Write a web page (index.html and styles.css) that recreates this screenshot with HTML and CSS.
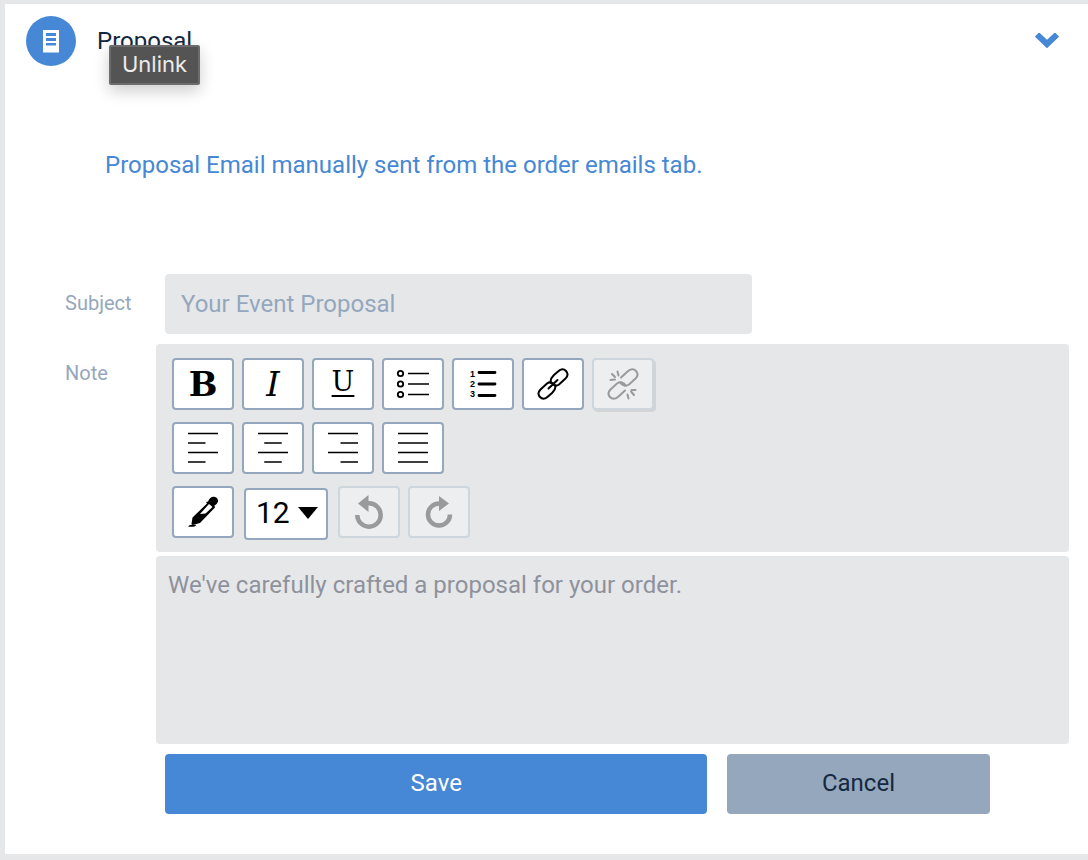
FILE: index.html
```html
<!DOCTYPE html>
<html lang="en">
    <head>
        <meta charset="utf-8">
        <title>Proposal</title>
        <link rel="stylesheet" href="styles.css">
    </head>
    <body>
        <main class="panel">
            <header class="panel_head">
                <span class="panel_icon">
                    <svg width="50" height="50" viewBox="0 0 50 50" aria-hidden="true">
                        <path fill="#fff" fill-rule="evenodd" d="M17 14h16v22.500h-16zM20 17v3h10v-3zM20 22v3h10v-3zM20 27v2.500h10v-2.500z"/>
                    </svg>
                </span>
                <h1 class="panel_title">Proposal<span class="tooltip" role="tooltip" id="unlink_tip">Unlink</span></h1>
                <button type="button" class="collapse" aria-label="Collapse">
                    <svg width="24" height="16" viewBox="0 0 24 16"><path d="M2 1.500l10 9.500L22 1.500" fill="none" stroke="#4688d6" stroke-width="6"/></svg>
                </button>
            </header>
            <p class="message">Proposal Email manually sent from the order emails tab.</p>
            <form class="mail_form">
                <label class="form_label" for="subject">Subject</label>
                <input class="subject" type="text" id="subject" placeholder="Your Event Proposal">

                <label class="form_label note_label" for="note">Note</label>
                <div class="editor">
                    <div class="toolbar">
                        <div class="tool_row">
                            <button type="button" class="tool bold" aria-label="Bold">B</button>
                            <button type="button" class="tool italic" aria-label="Italic">I</button>
                            <button type="button" class="tool underline" aria-label="Underline">U</button>
                            <button type="button" class="tool" aria-label="Bulleted list">
                                <svg width="34" height="30" viewBox="0 0 34 30" fill="none" stroke="#000">
                                    <g stroke-width="1.800"><circle cx="4.500" cy="4.500" r="2.700"/><circle cx="4.500" cy="15" r="2.700"/><circle cx="4.500" cy="25.500" r="2.700"/></g>
                                    <path stroke-width="1.300" d="M12 4.500h21M12 15h21M12 25.500h21"/>
                                </svg>
                            </button>
                            <button type="button" class="tool" aria-label="Numbered list">
                                <svg width="30" height="30" viewBox="0 0 30 30">
                                    <path fill="none" stroke="#000" stroke-width="2.800" stroke-linecap="round" d="M11 3.500h16M11 15h16M11 26.500h16"/>
                                    <g class="list_number"><text x="2" y="8">1</text><text x="2" y="18">2</text><text x="2" y="28">3</text></g>
                                </svg>
                            </button>
                            <button type="button" class="tool" aria-label="Link">
                                <svg width="32" height="32" viewBox="0 0 32 32" fill="none" stroke="#000" stroke-width="2" stroke-linecap="round">
                                    <path d="M14 15C12.500 11 15 9 17 7L21 3.500C24 .5 27 .8 29 3S31 8 28.500 10.500L22 16.500C20 18 18 18 16 16.500"/>
                                    <path d="M18 17C19.500 21 17 23 15 25L11 28.500C8 31.500 5 31.200 3 29S1 24 3.500 21.500L10 15.500C12 14 14 14 16 15.500"/>
                                    <path d="M11.500 20.500l9-8.500"/>
                                </svg>
                            </button>
                            <button type="button" class="tool hovered" aria-label="Unlink" aria-describedby="unlink_tip" disabled>
                                <svg width="32" height="32" viewBox="0 0 32 32" fill="none" stroke="#000" stroke-width="2" stroke-linecap="round">
                                    <path d="M14 9.500L20.500 3.500C23.500 .5 27 .8 29 3S31 8 28.500 10.500L22 16.500C19 18.500 15 18 13.500 14.500"/>
                                    <path d="M18 22.500L11.500 28.500C8.500 31.500 5 31.200 3 29S1 24 3.500 21.500L10 15.500C13 13.500 17 14 18.500 17.500"/>
                                    <path d="M10.500 3.500l1 4M5 6l3 3M3.500 12l4.500-.5M21.500 30.500l-1-4M27 27l-3-3.500M28.500 22h-4"/>
                                </svg>
                            </button>
                        </div>
                        <div class="tool_row">
                            <button type="button" class="tool" aria-label="Align left">
                                <svg width="30" height="32" viewBox="0 0 30 32" fill="none" stroke="#000" stroke-width="1.500"><path d="M0 1.500h30M0 11h17.500M0 20.500h30M0 30h17.500"/></svg>
                            </button>
                            <button type="button" class="tool" aria-label="Align center">
                                <svg width="30" height="32" viewBox="0 0 30 32" fill="none" stroke="#000" stroke-width="1.500"><path d="M0 1.500h30M6.250 11h17.500M0 20.500h30M6.250 30h17.500"/></svg>
                            </button>
                            <button type="button" class="tool" aria-label="Align right">
                                <svg width="30" height="32" viewBox="0 0 30 32" fill="none" stroke="#000" stroke-width="1.500"><path d="M0 1.500h30M12.500 11h17.500M0 20.500h30M12.500 30h17.500"/></svg>
                            </button>
                            <button type="button" class="tool" aria-label="Justify">
                                <svg width="30" height="32" viewBox="0 0 30 32" fill="none" stroke="#000" stroke-width="1.500"><path d="M0 1.500h30M0 11h30M0 20.500h30M0 30h30"/></svg>
                            </button>
                        </div>
                        <div class="tool_row">
                            <button type="button" class="tool" aria-label="Text color">
                                <svg width="30" height="32" viewBox="0 0 30 32">
                                    <path d="M20 5.500c1.500-3.500 4-5.500 7-4.500 3 1 4 4 2 6.500-.8 1-1.700 1.500-2.500 2l.5 2-1.500 1.500L12 27l-7.500 2-1-1 1-6.500L19 7.500l-1-1.500z"/>
                                    <path fill="#fff" d="M21 8l3.500 3-7 6.500-5.500.5z"/>
                                    <path d="M0 30.500c2-1.800 5-1.800 8.500-1.500-1.500 1.800-4.500 2.300-8.500 1.500z"/>
                                </svg>
                            </button>
                            <div class="size_box">
                                <select class="size" aria-label="Font size">
                                    <option>12</option>
                                    <option>14</option>
                                    <option>16</option>
                                </select>
                            </div>
                            <button type="button" class="tool" aria-label="Undo" disabled>
                                <svg width="30" height="36" viewBox="0 0 30 36"><path fill="none" stroke="#000" stroke-width="4.500" d="M3.300 21A11.700 11.700 0 1 0 15 9.300H11"/><path d="M14.500 1v17L4 9.500z"/></svg>
                            </button>
                            <button type="button" class="tool" aria-label="Redo" disabled>
                                <svg width="30" height="36" viewBox="0 0 30 36"><path fill="none" stroke="#000" stroke-width="4.500" d="M26 20.500A11 11 0 1 1 15 9.500h2"/><path d="M15 2v15l10-7.500z"/></svg>
                            </button>
                        </div>
                    </div>
                    <textarea class="note" id="note" placeholder="We've carefully crafted a proposal for your order."></textarea>
                </div>

                <div class="actions">
                    <button type="submit" class="save">Save</button>
                    <button type="button" class="cancel">Cancel</button>
                </div>
            </form>
        </main>
    </body>
</html>
```
FILE: styles.css
```css
* {
    box-sizing: border-box;
}
body {
    margin: 0;
    padding: 4px 0 6px 5px;
    background: #e6e7e9;
    font-family: Roboto, "Liberation Sans", sans-serif;
    font-size: 24px;
    line-height: 28px;
}
button, input, select, textarea {
    font: inherit;
    margin: 0;
}
.panel {
    background: #fff;
    padding: 12px 19px 40px 21px;
}

/* header */
.panel_head {
    display: flex;
    align-items: center;
    gap: 21px;
}
.panel_icon {
    width: 50px;
    height: 50px;
    border-radius: 50%;
    background: #4688d6;
}
.panel_title {
    position: relative;
    flex: 1;
    margin: 0;
    font-size: 24px;
    font-weight: 400;
    color: #14283f;
}
.tooltip {
    position: absolute;
    left: 12px;
    top: 18px;
    padding: 3px 11px 5px;
    border: 2px solid #6c6c6c;
    border-radius: 2px;
    background: #545454;
    box-shadow: 0 6px 16px rgba(0, 0, 0, 0.2);
    color: #ececec;
    font-family: Inter, sans-serif;
    font-size: 22px;
}
.collapse {
    padding: 0;
    margin-right: 10px;
    border: 0;
    background: none;
    line-height: 0;
}
.message {
    margin: 85px 0 95px 79px;
    color: #4688d6;
}

/* form */
.mail_form {
    display: grid;
    grid-template-columns: 91px 1fr;
    row-gap: 10px;
    padding-left: 39px;
}
.form_label {
    padding-top: 15px;
    font-size: 20px;
    color: #94a7bd;
}
.subject {
    width: calc(65% - 6px);
    height: 60px;
    margin-left: 9px;
    padding: 0 16px;
    border: 0;
    border-radius: 4px;
    background: #e6e7e9;
}
.subject::placeholder {
    color: #94a7bd;
}
.toolbar {
    display: flex;
    flex-direction: column;
    gap: 12px;
    padding: 14px 16px 12px;
    border-radius: 4px;
    background: #e6e7e9;
}
.tool_row {
    display: flex;
    flex-wrap: wrap;
    gap: 8px;
}
.tool {
    display: flex;
    align-items: center;
    justify-content: center;
    width: 62px;
    height: 52px;
    padding: 0;
    border: 2px solid #94a7bd;
    border-radius: 4px;
    background: #fff;
    color: #000;
}
.tool:disabled {
    border-color: #cdd5dd;
    background: #edeef0;
}
.tool:disabled svg {
    opacity: 0.35;
}
.hovered {
    box-shadow: 2px 2px 0 rgba(0, 0, 0, 0.08);
}
.bold, .italic, .underline {
    font-family: "DejaVu Serif", serif;
    font-size: 34px;
}
.bold {
    font-weight: 700;
}
.italic {
    font-style: italic;
}
.underline {
    padding-bottom: 4px;
    font-size: 27px;
    text-decoration: underline;
    text-decoration-thickness: 2px;
    text-underline-offset: 4px;
}
.list_number {
    font-family: "Liberation Sans Narrow", "Liberation Sans", sans-serif;
    font-size: 9px;
    font-weight: 700;
}
.size_box {
    position: relative;
    margin: 2px 2px 0;
}
.size_box::after {
    content: "";
    position: absolute;
    right: 10px;
    top: 19px;
    border: 10px solid transparent;
    border-top: 12px solid #000;
    border-bottom: 0;
    pointer-events: none;
}
.size {
    display: block;
    width: 84px;
    height: 52px;
    padding: 0 10px 2px;
    border: 2px solid #94a7bd;
    border-radius: 4px;
    background: #fff;
    color: #000;
    font-size: 30px;
    appearance: none;
}
.note {
    display: block;
    width: 100%;
    height: 188px;
    margin-top: 4px;
    padding: 15px 12px;
    border: 0;
    border-radius: 4px;
    background: #e6e7e9;
    resize: none;
}
.note::placeholder {
    color: #8e929c;
}

/* buttons */
.actions {
    grid-column: 2;
    display: flex;
    gap: 20px;
    padding-left: 9px;
}
.save, .cancel {
    height: 60px;
    padding: 0 0 2px;
    border: 0;
    border-radius: 4px;
}
.save {
    width: 60%;
    background: #4688d6;
    color: #fff;
}
.cancel {
    width: 29%;
    background: #94a7bd;
    color: #14283f;
}
```
